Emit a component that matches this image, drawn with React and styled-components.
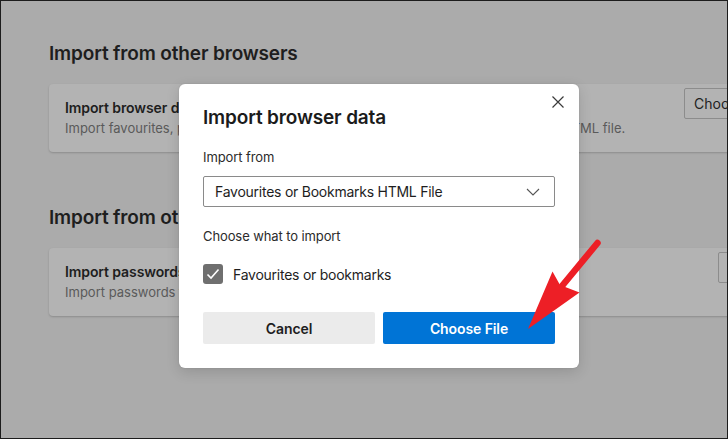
import React from "react";
import styled, { createGlobalStyle } from "styled-components";

const Global = createGlobalStyle`
  html, body { margin: 0; padding: 0; }
  body {
    width: 728px;
    height: 439px;
    overflow: hidden;
    font-family: Inter, "Noto Sans", "Liberation Sans", sans-serif;
    -webkit-font-smoothing: antialiased;
  }
`;

const Frame = styled.div`
  position: relative;
  width: 728px;
  height: 439px;
  box-sizing: border-box;
  border: 1px solid #1c1c1c;
  background: #ababab;
  overflow: hidden;
`;

const Settings = styled.main`
  display: flex;
  flex-direction: column;
  padding: 39px 0 0 48px;
  width: 752px;
`;

const SectionTitle = styled.h2`
  margin: 0 0 16px;
  font-size: 19px;
  line-height: 28px;
  font-weight: 600;
  color: #1e1e1e;
  letter-spacing: -0.15px;
`;

const Section = styled.section`
  display: flex;
  flex-direction: column;
  & + & { margin-top: 52px; }
`;

const Card = styled.div`
  display: flex;
  flex-direction: column;
  padding: 14px 16px 13px;
  background: #b3b3b3;
  border-radius: 4px;
  box-shadow: 0 1px 2px rgba(0, 0, 0, 0.18);
`;

const CardHead = styled.div`
  display: flex;
  align-items: center;
  justify-content: space-between;
  height: 20px;
`;

const CardTitle = styled.div`
  font-size: 14px;
  font-weight: 600;
  color: #1e1e1e;
  line-height: 20px;
  letter-spacing: -0.1px;
`;

const CardText = styled.div`
  font-size: 13px;
  line-height: 21px;
  color: #5a5a5a;
  white-space: nowrap;
  letter-spacing: 0;
`;

const GhostButton = styled.button`
  width: ${(p) => p.$w}px;
  height: 31px;
  margin: -10px 0 -1px;
  box-sizing: border-box;
  border: 1px solid #8c8c8c;
  border-radius: 2px;
  background: #b3b3b3;
  font-family: inherit;
  font-size: 14px;
  color: #222;
  text-align: left;
  padding: 0 9px;
  white-space: nowrap;
  overflow: hidden;
`;

const Backdrop = styled.div`
  position: absolute;
  inset: 0;
  display: flex;
  align-items: flex-start;
  justify-content: flex-start;
  padding: 83px 0 0 178px;
`;

const Dialog = styled.div`
  position: relative;
  width: 400px;
  box-sizing: border-box;
  padding: 20px 24px 24px;
  background: #ffffff;
  border-radius: 6px;
  box-shadow: 0 4px 14px rgba(0, 0, 0, 0.14), 0 0 2px rgba(0, 0, 0, 0.1);
  display: flex;
  flex-direction: column;
`;

const Close = styled.button`
  position: absolute;
  top: 10px;
  right: 13px;
  width: 16px;
  height: 16px;
  padding: 0;
  border: 0;
  background: none;
  display: grid;
  place-items: center;
`;

const DialogTitle = styled.h1`
  margin: 0 0 16px;
  font-size: 19px;
  line-height: 28px;
  font-weight: 600;
  color: #1b1b1b;
  letter-spacing: -0.15px;
`;

const Label = styled.div`
  font-size: 13px;
  line-height: 18px;
  color: #2b2b2b;
  letter-spacing: -0.1px;
  margin-bottom: ${(p) => p.$gap}px;
`;

const Select = styled.div`
  display: flex;
  align-items: center;
  justify-content: space-between;
  height: 31px;
  box-sizing: border-box;
  border: 1.5px solid #8a8a8a;
  border-radius: 2px;
  padding: 0 14px 0 11px;
  font-size: 14px;
  letter-spacing: -0.25px;
  color: #1e1e1e;
  margin-bottom: 20px;
`;

const CheckRow = styled.label`
  display: flex;
  align-items: center;
  gap: 10px;
  font-size: 14px;
  letter-spacing: -0.25px;
  color: #1e1e1e;
  margin-bottom: 28px;
`;

const Box = styled.span`
  width: 20px;
  height: 20px;
  border-radius: 3px;
  background: #6f6f6f;
  display: grid;
  place-items: center;
`;

const Actions = styled.div`
  display: grid;
  grid-template-columns: 1fr 1fr;
  gap: 8px;
`;

const ActionButton = styled.button`
  height: 32px;
  border: 0;
  border-radius: 2px;
  font-family: inherit;
  font-size: 14px;
  font-weight: 600;
  letter-spacing: -0.1px;
  background: ${(p) => (p.$primary ? "#0074d6" : "#ebebeb")};
  color: ${(p) => (p.$primary ? "#ffffff" : "#1e1e1e")};
`;

const Pointer = styled.svg`
  position: absolute;
  left: 0;
  top: 0;
  pointer-events: none;
`;

const settings = [
  {
    heading: "Import from other browsers",
    title: "Import browser data",
    text: "Import favourites, passwords, history and other data from another browser or an HTML file.",
    button: "Choose file",
    width: 101,
  },
  {
    heading: "Import from other password managers",
    title: "Import passwords",
    text: "Import passwords from a file.",
    button: "Import",
    width: 67,
  },
];

export default function App() {
  return (
    <>
      <Global />
      <Frame>
        <Settings>
          {settings.map((s) => (
            <Section key={s.heading}>
              <SectionTitle>{s.heading}</SectionTitle>
              <Card>
                <CardHead>
                  <CardTitle>{s.title}</CardTitle>
                  <GhostButton $w={s.width}>{s.button}</GhostButton>
                </CardHead>
                <CardText>{s.text}</CardText>
              </Card>
            </Section>
          ))}
        </Settings>

        <Backdrop>
          <Dialog>
            <Close aria-label="Close">
              <svg width="14" height="14" viewBox="0 0 14 14">
                <path d="M1.5 1.5 L12.5 12.5 M12.5 1.5 L1.5 12.5" stroke="#3a3a3a" strokeWidth="1.2" fill="none" />
              </svg>
            </Close>
            <DialogTitle>Import browser data</DialogTitle>
            <Label $gap={10}>Import from</Label>
            <Select>
              <span>Favourites or Bookmarks HTML File</span>
              <svg width="14" height="8" viewBox="0 0 14 8">
                <path d="M1 1 L7 7 L13 1" stroke="#555" strokeWidth="1.1" fill="none" />
              </svg>
            </Select>
            <Label $gap={19}>Choose what to import</Label>
            <CheckRow>
              <Box>
                <svg width="14" height="12" viewBox="0 0 14 12">
                  <path d="M1.5 6.5 L5 10 L12.5 1.5" stroke="#fff" strokeWidth="1.6" fill="none" />
                </svg>
              </Box>
              Favourites or bookmarks
            </CheckRow>
            <Actions>
              <ActionButton>Cancel</ActionButton>
              <ActionButton $primary>Choose File</ActionButton>
            </Actions>
          </Dialog>
        </Backdrop>

        <Pointer width="728" height="439" viewBox="0 0 728 439">
          <line x1="596.5" y1="242" x2="561" y2="285" stroke="#ed1f26" strokeWidth="6.5" strokeLinecap="round" />
          <polygon points="527,328 551.5,270.5 559,284 578.5,291.5" fill="#ed1f26" />
        </Pointer>
      </Frame>
    </>
  );
}
